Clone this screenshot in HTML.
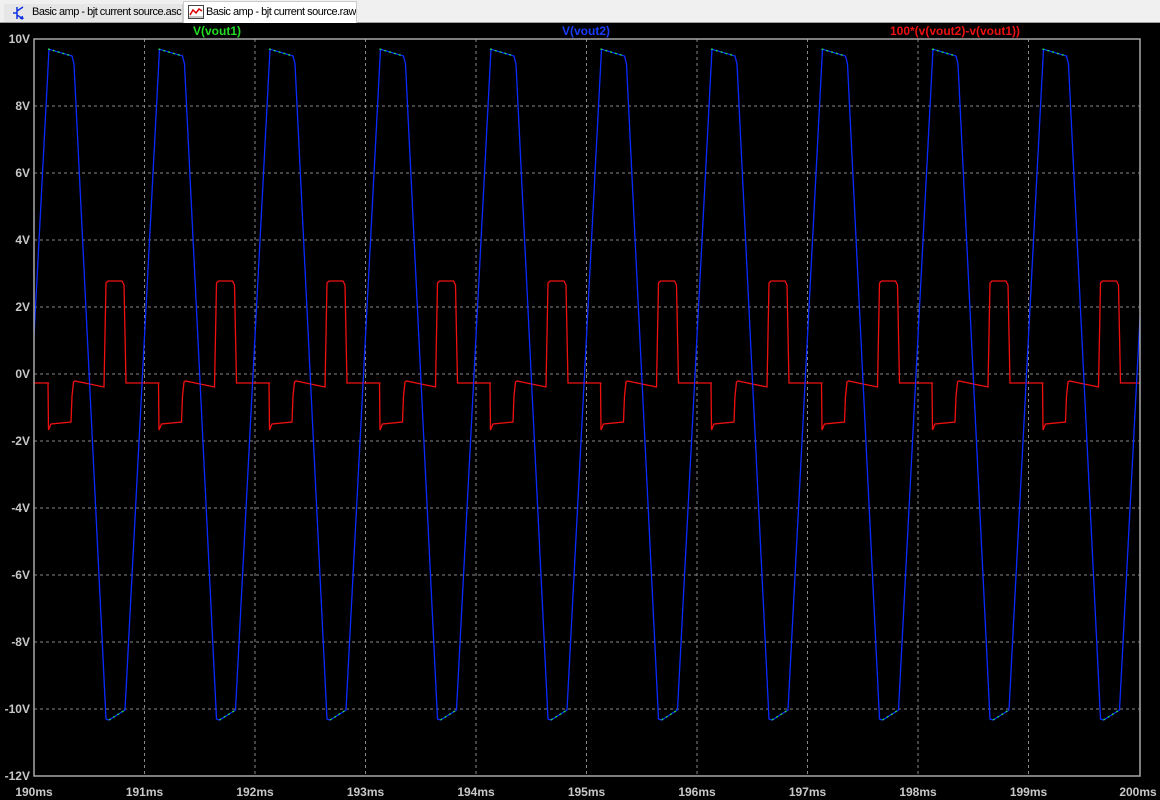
<!DOCTYPE html>
<html><head><meta charset="utf-8"><style>
html,body{margin:0;padding:0;background:#000;width:1160px;height:800px;overflow:hidden}
.tabs{position:absolute;left:0;top:0;width:1160px;height:22px;background:#f0f0f0;border-bottom:1px solid #a0a0a0;font:11px "Liberation Sans",sans-serif;letter-spacing:-0.5px;color:#000;white-space:nowrap}
.tab{position:absolute;top:3px;height:19px;line-height:19px;white-space:nowrap;overflow:hidden}
</style></head><body>
<div class="tabs">
<div class="tab" style="left:4px;width:178px;background:#e6e6e6;border-right:1px solid #ccc;top:4px;height:18px">
<svg width="16" height="16" style="position:absolute;left:8px;top:1px"><path d="M5 2V14M5 8H1M5 6L11 2M5 10L11 14M11 14L8 13M11 14L10 11" stroke="#1030e0" stroke-width="1.5" fill="none"/></svg>
<span style="position:absolute;left:28px;top:-1px">Basic amp - bjt current source.asc</span></div>
<div class="tab" style="left:183px;width:172px;background:#fff;border:1px solid #ccc;border-bottom:none;top:1px;height:21px">
<svg width="16" height="14" style="position:absolute;left:4px;top:3px"><rect x="0.5" y="0.5" width="15" height="13" fill="#fff" stroke="#444"/><path d="M2 10L5 5L8 8L11 4L14 6" stroke="#d00" stroke-width="1.5" fill="none"/><path d="M1 12H15" stroke="#888"/></svg>
<span style="position:absolute;left:22px;top:1px">Basic amp - bjt current source.raw</span></div>
</div>
<svg width="1160" height="777" style="position:absolute;left:0;top:23px" viewBox="0 23 1160 777">
<defs>
<clipPath id="c"><rect x="34" y="39" width="1106" height="737"/></clipPath>
<g id="b"><path d="M14,49 L38,56 L40,64 L72,719 L75,720 L91,710 L125.5,49" fill="none" stroke="#0a2cff" stroke-width="1.3"/>
<path d="M14,49 L38,56 M75,720 L91,710" fill="none" stroke="#20e040" stroke-width="1.3" stroke-dasharray="2 3"/></g>
<g id="r"><path d="M14,383 L14.5,430 L17,424 L37,422 L38,396 L39.5,382 L41,381 L70,387 L72,283 L74,281 L88,281 L90,285 L92,383 L125,383 L125.5,383" fill="none" stroke="#f01010" stroke-width="1.3"/></g>
</defs>
<g stroke="#888" stroke-dasharray="3 3" stroke-width="1">
<path d="M144.5 39V776M255 39V776M365.5 39V776M476 39V776M586.5 39V776M697 39V776M807.5 39V776M918 39V776M1028.5 39V776"/>
<path d="M34 106H1140M34 173H1140M34 240H1140M34 307H1140M34 374H1140M34 441H1140M34 508H1140M34 575H1140M34 642H1140M34 709H1140"/>
</g>
<g clip-path="url(#c)">
<g transform="translate(34,0)">
<use href="#r" x="-110.5"/><use href="#r" x="0"/><use href="#r" x="110.5"/><use href="#r" x="221"/><use href="#r" x="331.5"/><use href="#r" x="442"/><use href="#r" x="552.5"/><use href="#r" x="663"/><use href="#r" x="773.5"/><use href="#r" x="884"/><use href="#r" x="994.5"/>
<use href="#b" x="-110.5"/><use href="#b" x="0"/><use href="#b" x="110.5"/><use href="#b" x="221"/><use href="#b" x="331.5"/><use href="#b" x="442"/><use href="#b" x="552.5"/><use href="#b" x="663"/><use href="#b" x="773.5"/><use href="#b" x="884"/><use href="#b" x="994.5"/>
</g></g>
<rect x="34" y="39" width="1106" height="737" fill="none" stroke="#a8a8a8" stroke-width="1.5"/>
<g font-family="Liberation Sans,sans-serif" font-weight="bold" font-size="12" fill="#c8c8c8" text-anchor="end">
<text x="30" y="43">10V</text><text x="30" y="110">8V</text><text x="30" y="177">6V</text><text x="30" y="244">4V</text><text x="30" y="311">2V</text><text x="30" y="378">0V</text><text x="30" y="445">-2V</text><text x="30" y="512">-4V</text><text x="30" y="579">-6V</text><text x="30" y="646">-8V</text><text x="30" y="713">-10V</text><text x="30" y="780">-12V</text>
</g>
<g font-family="Liberation Sans,sans-serif" font-weight="bold" font-size="12" fill="#c8c8c8" text-anchor="middle">
<text x="34" y="796">190ms</text><text x="144.5" y="796">191ms</text><text x="255" y="796">192ms</text><text x="365.5" y="796">193ms</text><text x="476" y="796">194ms</text><text x="586.5" y="796">195ms</text><text x="697" y="796">196ms</text><text x="807.5" y="796">197ms</text><text x="918" y="796">198ms</text><text x="1028.5" y="796">199ms</text><text x="1138" y="796">200ms</text>
</g>
<g font-family="Liberation Sans,sans-serif" font-weight="bold" font-size="12" text-anchor="middle">
<text x="217" y="35" fill="#22dd22">V(vout1)</text>
<text x="586" y="35" fill="#1a3cff">V(vout2)</text>
<text x="955" y="35" fill="#ee1111">100*(v(vout2)-v(vout1))</text>
</g>
</svg>
</body></html>
